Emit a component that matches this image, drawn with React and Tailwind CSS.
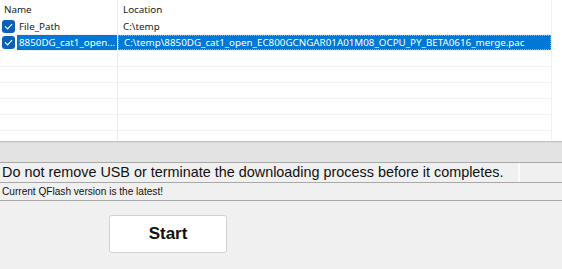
import React from 'react';

const rows = [
  { name: 'File_Path', location: 'C:\\temp', checked: true },
  {
    name: '8850DG_cat1_open...',
    location: 'C:\\temp\\8850DG_cat1_open_EC800GCNGAR01A01M08_OCPU_PY_BETA0616_merge.pac',
    checked: true,
    selected: true,
  },
  {}, {}, {}, {}, {}, {},
];

function Check() {
  return (
    <span className="w-[13px] h-[13px] rounded-[3px] bg-[#0a60b6] flex items-center justify-center shrink-0">
      <svg width="9" height="9" viewBox="0 0 10 10" fill="none">
        <path d="M1.5 5.2 L4 7.6 L8.6 2.6" stroke="white" strokeWidth="1.3" strokeLinecap="round" strokeLinejoin="round" />
      </svg>
    </span>
  );
}

export default function App() {
  return (
    <div className="w-[562px] h-[269px] bg-[#f0f0f0] flex flex-col overflow-hidden font-['Noto_Sans',sans-serif] text-[#1a1a1a]">
      {/* file list */}
      <div className="h-[141px] bg-white flex overflow-hidden shrink-0">
        <div className="w-[552px] border-r border-[#f0f0f0] flex flex-col text-[9.8px]">
          <div className="h-[19px] flex shrink-0">
            <div className="w-[118px] border-r border-[#ececec] pl-[4px] pt-[3px]">Name</div>
            <div className="flex-1 pl-[5px] pt-[3px]">Location</div>
          </div>
          {rows.map((r, i) => (
            <div key={i} className="h-[16px] flex shrink-0 border-b border-[#f1f1f1]">
              <div className="w-[118px] border-r border-[#ececec] flex items-center pl-[2px]">
                {r.checked && <Check />}
                {r.name && (
                  <span
                    className={`ml-[2px] h-full flex items-center pl-[2px] pt-[1px] flex-1 whitespace-nowrap ${
                      r.selected ? 'bg-[#0078d7] text-white' : ''
                    }`}
                  >
                    {r.name}
                  </span>
                )}
              </div>
              <div
                className={`flex-1 flex items-center pl-[5px] pt-[1px] whitespace-nowrap ${
                  r.selected ? 'bg-[#0078d7] text-white border border-dotted border-[#7fb8e8]' : ''
                }`}
              >
                {r.location}
              </div>
            </div>
          ))}
        </div>
        <div className="flex-1" />
      </div>

      {/* splitter */}
      <div className="h-[1px] bg-[#c4c4c8] shrink-0" />
      <div className="h-[1px] bg-[#d8d8dc] shrink-0" />
      <div className="h-[19px] bg-[#e3e3e3] shrink-0" />

      {/* message bar */}
      <div className="h-[1px] bg-[#a8a8a8] shrink-0" />
      <div className="h-[19px] flex shrink-0 font-['Liberation_Sans',Arial,sans-serif]">
        <div className="w-[518px] pl-[2px] flex items-center text-[14.4px] text-[#111] whitespace-nowrap">
          Do not remove USB or terminate the downloading process before it completes.
        </div>
        <div className="w-[2px] bg-[#fafafa]" />
        <div className="flex-1" />
      </div>
      <div className="h-[1px] bg-[#a8a8a8] shrink-0" />
      <div className="h-[17px] flex items-center pl-[2px] shrink-0 font-['Liberation_Sans',Arial,sans-serif] text-[10.1px] text-[#111]">
        Current QFlash version is the latest!
      </div>
      <div className="h-[1px] bg-[#a8a8a8] shrink-0" />

      {/* actions */}
      <div className="flex-1 pl-[109px] pt-[14px]">
        <button className="w-[118px] h-[38px] bg-white border border-[#d2d2d2] rounded-[3px] font-['Liberation_Sans',Arial,sans-serif] font-bold text-[17px] text-[#111]">
          Start
        </button>
      </div>
    </div>
  );
}
